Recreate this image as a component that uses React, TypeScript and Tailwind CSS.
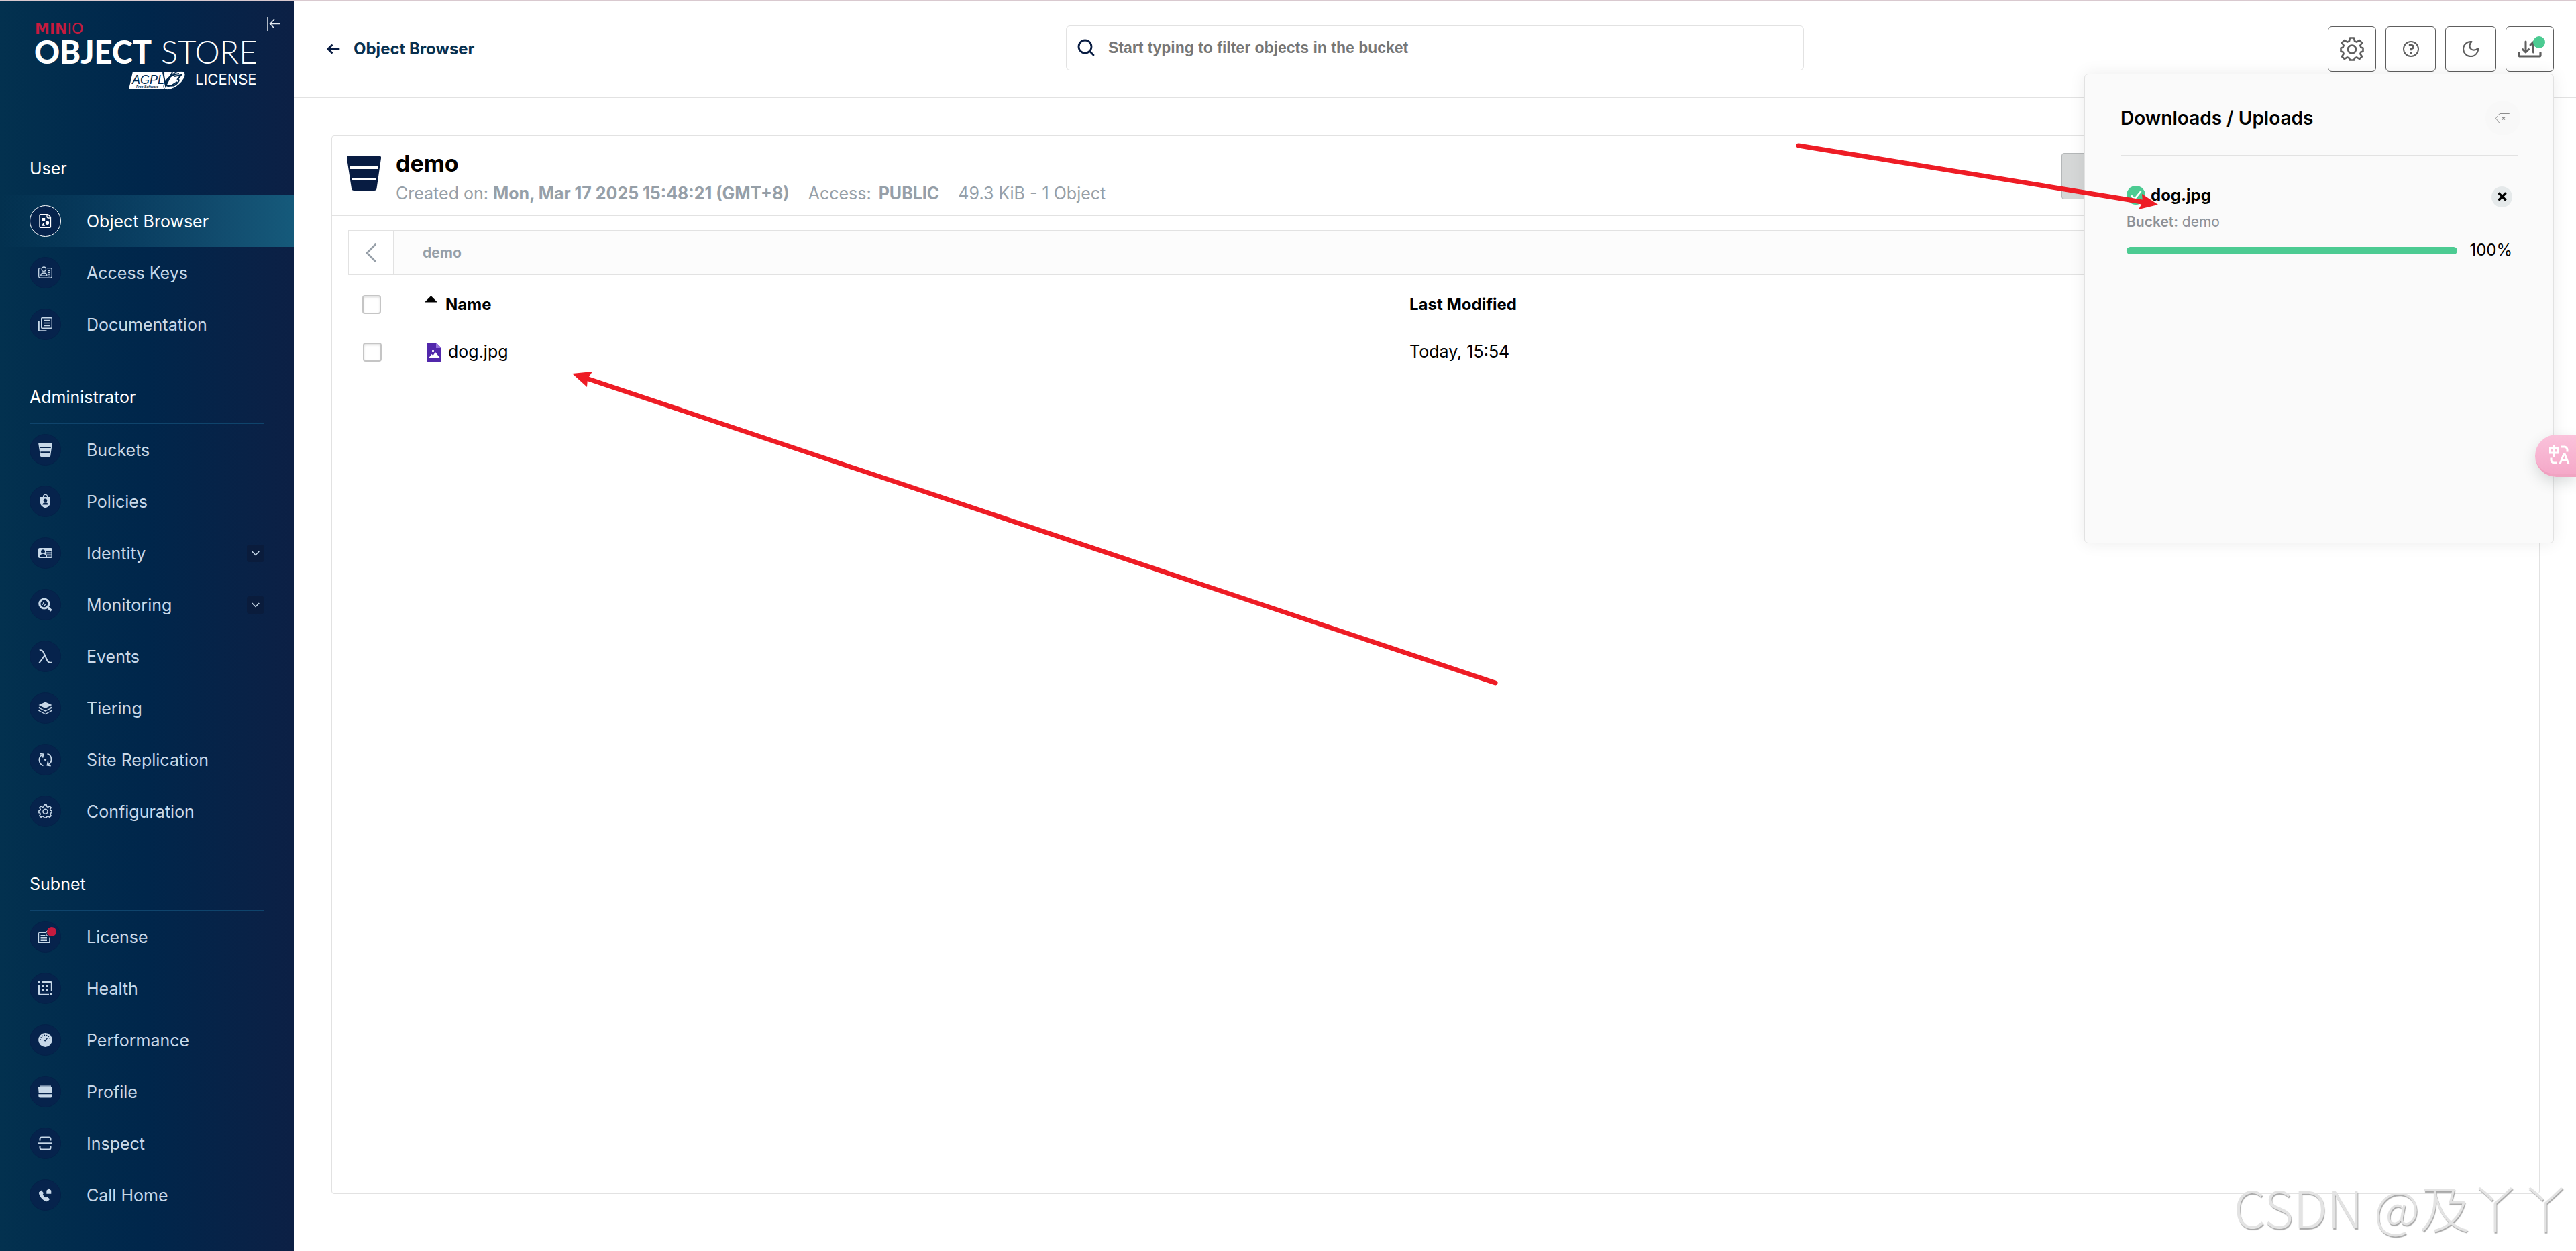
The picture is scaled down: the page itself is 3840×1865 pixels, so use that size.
import React, { useState } from "react";
import { RiTranslate } from "react-icons/ri";

type IconProps = {
  className?: string;
};

type NavItem = {
  label: string;
  icon: React.FC<IconProps>;
  active?: boolean;
  expandable?: boolean;
  badge?: boolean;
};

type NavSection = {
  title: string;
  items: NavItem[];
};

const BucketIcon: React.FC<IconProps> = ({ className }) => (
  <svg className={className} viewBox="0 0 51 52" fill="currentColor">
    <path
      fillRule="evenodd"
      d="M3 0h45q3.500 0 3 4l-6.500 45q-.5 3-3.500 3H10.500q-3 0-3.500-3L0 4Q-.5 0 3 0zM5 16v4h41v-4zM8 33v4h35v-4z"
    />
  </svg>
);

const ObjectBrowserIcon: React.FC<IconProps> = ({ className }) => (
  <svg className={className} viewBox="0 0 21 21" fill="currentColor">
    <path
      fill="none"
      stroke="currentColor"
      strokeWidth="1.300"
      d="M3 .7h11.500L18.500 4.500v14.500q0 1.300-1.300 1.300H3.300Q2 20.300 2 19V2q0-1.300 1-1.300zM13 .7v3.500q0 1.800 1.800 1.800h3.700"
    />
    <path d="M5 6h5.200v4.400H5zM7.500 13.200l2.600 4.600H4.900z" />
    <circle cx="13.500" cy="13.300" r="2.700" />
  </svg>
);

const AccessKeysIcon: React.FC<IconProps> = ({ className }) => (
  <svg
    className={className}
    viewBox="0 0 21 21"
    fill="none"
    stroke="currentColor"
    strokeWidth="1.300"
  >
    <path d="M4 3.700H2.500Q.7 3.700.7 5.500v10.800q0 1.800 1.800 1.800h16q1.800 0 1.800-1.800V5.500q0-1.800-1.800-1.800H13" />
    <circle cx="8.300" cy="5.200" r="3.200" />
    <path d="M3.700 15.200q0-4.200 4.600-4.200t4.600 4.200z" />
    <path d="M14 7.500h4M14 10.500h4M14 13h4M14 15.500h4" strokeWidth="1.500" />
  </svg>
);

const DocumentationIcon: React.FC<IconProps> = ({ className }) => (
  <svg
    className={className}
    viewBox="0 0 21 21"
    fill="none"
    stroke="currentColor"
    strokeWidth="1.400"
  >
    <rect x="4.700" y=".7" width="15.600" height="15.600" rx="1" />
    <path d="M8 4.500h9M8 8.500h9M8 12.500h9" strokeWidth="1.700" />
    <path d="M.9 5.500v14.600h11.500" strokeWidth="1.800" />
  </svg>
);

const PoliciesIcon: React.FC<IconProps> = ({ className }) => (
  <svg className={className} viewBox="0 0 21 21" fill="currentColor">
    <path
      fillRule="evenodd"
      d="M3 4h15v8.500q0 5-7.500 8Q3 17.500 3 12.500zM10.500 6.500a2.800 2.800 0 1 0 .01 0zM6.300 15.500h8.400q-.5-3.300-4.200-3.300t-4.200 3.300z"
    />
    <path
      d="M7.500 4.500V3.200a3 2.800 0 0 1 6 0v1.300"
      fill="none"
      stroke="currentColor"
      strokeWidth="1.200"
    />
  </svg>
);

const IdentityIcon: React.FC<IconProps> = ({ className }) => (
  <svg className={className} viewBox="0 0 21 21" fill="currentColor">
    <path
      fillRule="evenodd"
      d="M2 3h17q2 0 2 2v11q0 2-2 2H2q-2 0-2-2V5q0-2 2-2zM7 5.200a3 3 0 1 0 .01 0zM2.500 16h9q-.4-4-4.500-4t-4.500 4zM12 8v1.400h7.500V8zM12 11.200v1.400h7.500v-1.400zM13 14.300v1.400h6.500v-1.400z"
    />
  </svg>
);

const MonitoringIcon: React.FC<IconProps> = ({ className }) => (
  <svg
    className={className}
    viewBox="0 0 21 21"
    fill="none"
    stroke="currentColor"
  >
    <circle cx="8.800" cy="9" r="7" strokeWidth="3.200" />
    <path d="M14.500 14.500l5 5" strokeWidth="3.600" />
    <path d="M5 10.500h1.500L8 7l1.500 5L11 9.500h10" strokeWidth="1" />
  </svg>
);

const EventsIcon: React.FC<IconProps> = ({ className }) => (
  <svg
    className={className}
    viewBox="0 0 21 21"
    fill="none"
    stroke="currentColor"
    strokeWidth="2"
  >
    <path d="M1.800 1.300Q6 .5 8 5l5.500 12q2.300 4 7.200 2.400M9.500 9Q6 14.500 1.300 20.300" />
  </svg>
);

const TieringIcon: React.FC<IconProps> = ({ className }) => (
  <svg
    className={className}
    viewBox="0 0 21 21"
    fill="none"
    stroke="currentColor"
    strokeWidth="1.400"
  >
    <path d="M10.500 1.500L20.500 6l-10 5L.5 6z" fill="currentColor" stroke="none" />
    <path d="M2.500 9L1 10.300l9.500 4.700 9.500-4.700L18.500 9M2.500 13.200L1 14.500l9.500 5 9.500-5-1.500-1.300" />
  </svg>
);

const ReplicationIcon: React.FC<IconProps> = ({ className }) => (
  <svg
    className={className}
    viewBox="0 0 21 21"
    fill="none"
    stroke="currentColor"
    strokeWidth="1.800"
  >
    <path d="M7.500 19.300A8.800 8.800 0 0 1 6.500 3M2.300 1.500l5.200.7-1 5.300M13.500 1.700A8.800 8.800 0 0 1 14.500 18M18.700 19.500l-5.200-.7 1-5.300" />
    <circle cx="10.500" cy="10.500" r="1.600" fill="currentColor" stroke="none" />
  </svg>
);

const GearIcon: React.FC<IconProps> = ({ className }) => (
  <svg
    className={className}
    viewBox="0 0 36 36"
    fill="none"
    stroke="currentColor"
    strokeWidth="2.600"
    strokeLinejoin="round"
  >
    <path d="M15 1.500h6l1 4.800 3 1.300L29.200 5 33 8.800l-2.700 4 1.200 3 3 .7v5.200l-3 .6-1.200 3 2.700 4L29.200 33 25 30.400l-3 1.300-1 2.800h-6l-1-2.800-3-1.300L6.800 33 3 29.300l2.700-4-1.200-3-3-.6v-5.200l3-.7 1.200-3-2.700-4L6.800 5 11 7.600l3-1.300z" />
    <circle cx="18" cy="18.500" r="6" />
  </svg>
);

const LicenseIcon: React.FC<IconProps> = ({ className }) => (
  <svg
    className={className}
    viewBox="0 0 21 21"
    fill="none"
    stroke="currentColor"
    strokeWidth="1.200"
  >
    <path d="M11 4.500H1.200Q.6 4.500.6 5.500v14h16.200v-8" />
    <path d="M3.500 8.500h7M3.500 11.500h9.500M3.500 14h9.500M3.500 16.500h9.500" />
    <circle cx="15.500" cy="5.500" r="4" />
    <path d="M13.800 5.500l1.400 1.400 2.400-2.700" />
  </svg>
);

const HealthIcon: React.FC<IconProps> = ({ className }) => (
  <svg className={className} viewBox="0 0 21 21" fill="currentColor">
    <path d="M0 0h3v3H0zM5 0h14q2 0 2 2v13h-2.200V2.200H5zM18 18h3v3h-3zM0 5h2.200v13.800H16V21H2q-2 0-2-2z" />
    <path d="M6 6h3v3H6zM12 6h3v3h-3zM6 12h3v3H6zM12 12h3v3h-3z" />
  </svg>
);

const PerformanceIcon: React.FC<IconProps> = ({ className }) => (
  <svg className={className} viewBox="0 0 21 21" fill="currentColor">
    <circle cx="10.500" cy="10.500" r="10.400" />
    <path
      d="M3.300 10.500a7.200 7.200 0 0 1 14.400 0"
      fill="none"
      stroke="#06234c"
      strokeWidth="1.400"
      strokeDasharray="1.200 2"
    />
    <path d="M10.500 11l3-3M9 16.500h3" stroke="#06234c" strokeWidth="1.200" />
    <circle cx="10.300" cy="11.200" r="1.200" fill="#06234c" />
  </svg>
);

const ProfileIcon: React.FC<IconProps> = ({ className }) => (
  <svg className={className} viewBox="0 0 21 21" fill="currentColor">
    <path d="M2 1.500h17v1.300H2zM.5 3.700h20q.6 0 .5.800l-.7 8.600H.7L0 4.500q-.1-.8.500-.8zM.3 14.200h20.400v2q-.2 3.300-2 3.300H2.300q-1.800 0-2-3.300z" />
  </svg>
);

const InspectIcon: React.FC<IconProps> = ({ className }) => (
  <svg
    className={className}
    viewBox="0 0 21 21"
    fill="none"
    stroke="currentColor"
    strokeWidth="2"
  >
    <path d="M2.500 6.500V4q0-2.500 2.500-2.500h11q2.500 0 2.500 2.500v2.500M2.500 14.500V17q0 2.500 2.500 2.500h11q2.500 0 2.500-2.500v-2.500" />
    <path d="M0 10.500h21" strokeWidth="2.400" />
  </svg>
);

const CallHomeIcon: React.FC<IconProps> = ({ className }) => (
  <svg className={className} viewBox="0 0 21 21" fill="currentColor">
    <path d="M1 6.500L4.500 3.500 8 7.500 6.800 10q1.500 3.200 4.600 4.600l2.200-1 3.600 3.200-2.700 3Q10 21.500 4.500 15 .5 10 1 6.500z" />
    <path d="M15.800.8l4.500 3.900h-1v4h-7v-4h-1z" />
  </svg>
);

const navSections: NavSection[] = [
  {
    title: "User",
    items: [
      { label: "Object Browser", icon: ObjectBrowserIcon, active: true },
      { label: "Access Keys", icon: AccessKeysIcon },
      { label: "Documentation", icon: DocumentationIcon },
    ],
  },
  {
    title: "Administrator",
    items: [
      { label: "Buckets", icon: BucketIcon },
      { label: "Policies", icon: PoliciesIcon },
      { label: "Identity", icon: IdentityIcon, expandable: true },
      { label: "Monitoring", icon: MonitoringIcon, expandable: true },
      { label: "Events", icon: EventsIcon },
      { label: "Tiering", icon: TieringIcon },
      { label: "Site Replication", icon: ReplicationIcon },
      { label: "Configuration", icon: GearIcon },
    ],
  },
  {
    title: "Subnet",
    items: [
      { label: "License", icon: LicenseIcon, badge: true },
      { label: "Health", icon: HealthIcon },
      { label: "Performance", icon: PerformanceIcon },
      { label: "Profile", icon: ProfileIcon },
      { label: "Inspect", icon: InspectIcon },
      { label: "Call Home", icon: CallHomeIcon },
    ],
  },
];

const Logo = () => (
  <svg className="-ml-1 w-[344px] h-[118px]" viewBox="-4 -14 344 118" role="img">
    <text
      x="-1"
      y="17"
      fill="#c51b3f"
      fontFamily="DejaVu Sans"
      fontWeight="700"
      fontSize="22"
    >
      MIN
      <tspan fontWeight="400">IO</tspan>
    </text>
    <text x="-2" y="62" fill="#fff" fontFamily="Lato" fontSize="47" fontWeight="900">
      OBJECT
    </text>
    <text x="187" y="62" fill="#fff" fontFamily="Lato" fontSize="47" fontWeight="300">
      STORE
    </text>
    <path d="M145 74h47l3 26h-56z" fill="#fff" />
    <path d="M192 74h25L197 100h-4z" fill="#fff" />
    <ellipse
      cx="207"
      cy="87"
      rx="19"
      ry="9"
      transform="rotate(-38 207 87)"
      fill="#fff"
      stroke="#00284c"
      strokeWidth="1"
    />
    <path
      d="M190 75l4 20 10-20M214 77q-16 2-20 14 1 6 9 3l8-5"
      fill="none"
      stroke="#00284c"
      strokeWidth="2"
    />
    <path
      d="M207 81l10-2-5 6q4 1-1 6t-10 3"
      fill="none"
      stroke="#00284c"
      strokeWidth="2"
    />
    <text
      x="144"
      y="92"
      fill="#00284c"
      fontFamily="Liberation Sans"
      fontSize="18"
      fontStyle="italic"
    >
      AGPL
    </text>
    <text
      x="150"
      y="98"
      fill="#00284c"
      fontFamily="Liberation Sans"
      fontSize="5"
      fontWeight="700"
      fontStyle="italic"
    >
      Free Software
    </text>
    <text x="238" y="93" fill="#fff" fontFamily="Inter" fontSize="22">
      LICENSE
    </text>
  </svg>
);

const NavLink: React.FC<{ item: NavItem }> = ({ item }) => {
  const Icon = item.icon;

  return (
    <li>
      <a
        href="#"
        className={
          item.active
            ? "flex items-center h-[77px] pl-11 pr-11 text-white bg-linear-to-r from-[#155a7b]/0 to-[#155a7b]"
            : "flex items-center h-[77px] pl-11 pr-11 text-[#c8d8e8]"
        }
      >
        <span
          className={
            item.active
              ? "relative flex items-center justify-center size-[47px] rounded-full border border-white bg-[#06234c]"
              : "relative flex items-center justify-center size-[47px] rounded-full border border-[#042148] bg-[#06234c]"
          }
        >
          <Icon className="size-[21px]" />
          {item.badge && (
            <span className="absolute right-1.5 top-2 size-3.5 rounded-full bg-[#c51b3f]" />
          )}
        </span>
        <span className="ml-[38px] flex-1">{item.label}</span>
        {item.expandable && (
          <span className="flex items-center justify-center size-[26px] rounded-sm bg-[#0a1c3c]">
            <svg
              className="w-3 h-2"
              viewBox="0 0 12 8"
              fill="none"
              stroke="currentColor"
              strokeWidth="1.500"
            >
              <path d="M.7 1L6 6.500 11.300 1" />
            </svg>
          </span>
        )}
      </a>
    </li>
  );
};

const Sidebar = () => (
  <aside className="relative w-[438px] shrink-0 bg-linear-to-r from-[#03314f] via-[#00264b] to-[#0c2045] text-[25px] leading-8">
    <button className="absolute right-5 top-6" aria-label="Collapse menu">
      <svg
        className="w-5 h-[21px]"
        viewBox="0 0 20 21"
        fill="none"
        stroke="#e6ebf0"
        strokeWidth="1.500"
      >
        <path d="M1 0v21M20 10.500H5M11 4l-6.500 6.500L11 17" />
      </svg>
    </button>
    <div className="mx-[53px] h-[180px] pt-[18px] border-b border-[#0f446c]">
      <Logo />
    </div>
    <nav>
      {navSections.map((section) => (
        <section key={section.title}>
          <h2 className="ml-11 mr-11 h-[110px] pt-[54px] border-b border-[#0f446c] text-white">
            {section.title}
          </h2>
          <ul>
            {section.items.map((item) => (
              <NavLink key={item.label} item={item} />
            ))}
          </ul>
        </section>
      ))}
    </nav>
  </aside>
);

const Header = () => (
  <header className="grid grid-cols-[1fr_1100px_1fr] items-center h-[145px] px-[33px] border-b border-[#e2e2e2]">
    <a
      href="#"
      className="flex items-center gap-5 pl-4 text-2xl font-bold text-[#07304f]"
    >
      <svg
        className="w-5 h-4"
        viewBox="0 0 20 16"
        fill="none"
        stroke="#081c42"
        strokeWidth="3"
        strokeLinecap="round"
        strokeLinejoin="round"
      >
        <path d="M18 8H3M7.500 2.500L2 8l5.500 5.500" />
      </svg>
      Object Browser
    </a>
    <label className="flex items-center gap-5 h-[67px] mb-1 px-4 border border-[#e2e2e2] rounded-md">
      <svg
        className="size-[26px]"
        viewBox="0 0 26 26"
        fill="none"
        stroke="#081c42"
        strokeWidth="2.800"
        strokeLinecap="round"
      >
        <circle cx="11.500" cy="11.500" r="9.500" />
        <path d="M18.500 18.500l5.500 5.500" />
      </svg>
      <input
        type="text"
        placeholder="Start typing to filter objects in the bucket"
        aria-label="Filter objects"
        className="flex-1 font-['Liberation_Sans',sans-serif] text-[23px] font-bold outline-none placeholder:text-[#767676]"
      />
    </label>
    <div className="flex justify-end gap-3.5 text-[#5e5e5e]">
      <button
        aria-label="Settings"
        className="flex items-center justify-center w-[72px] h-[68px] border border-[#5e5e5e] rounded-md"
      >
        <GearIcon className="size-9" />
      </button>
      <button
        aria-label="Help"
        className="flex items-center justify-center w-[75px] h-[68px] border border-[#5e5e5e] rounded-md"
      >
        <svg className="size-6" viewBox="0 0 24 24" fill="none" stroke="currentColor">
          <circle cx="12" cy="12" r="11" strokeWidth="2" />
          <path d="M8.800 6.300h3.700q3 0 3 2.600t-3.500 2.800v2.500" strokeWidth="2.600" />
          <circle cx="12" cy="17.800" r="1.800" fill="currentColor" stroke="none" />
        </svg>
      </button>
      <button
        aria-label="Dark mode"
        className="flex items-center justify-center w-[76px] h-[68px] border border-[#5e5e5e] rounded-md"
      >
        <svg
          className="size-6"
          viewBox="0 0 24 24"
          fill="none"
          stroke="currentColor"
          strokeWidth="2.200"
          strokeLinejoin="round"
        >
          <path d="M13.500 1.200A11 11 0 1 0 23 11q-4 3.500-8.500 2.200Q10 11.500 10.500 6.500q.5-3.300 3-5.300z" />
        </svg>
      </button>
      <button
        aria-label="Downloads and uploads"
        className="relative flex items-center justify-center w-[72px] h-[68px] border border-[#5e5e5e] rounded-md"
      >
        <svg
          className="w-9 h-[26px]"
          viewBox="0 0 36 26"
          fill="none"
          stroke="currentColor"
          strokeLinecap="round"
          strokeLinejoin="round"
        >
          <path d="M2 18.500v4q0 1.500 1.500 1.500h29q1.500 0 1.500-1.500v-4" strokeWidth="3.200" />
          <path d="M12 2v15.500M7.500 13.500L12 18l4.500-4.500M23.500 18V2.500M19 7l4.500-4.500L28 7" strokeWidth="3" />
        </svg>
        <span className="absolute right-3 top-3.5 size-[18px] rounded-full bg-[#4ccb92]" />
      </button>
    </div>
  </header>
);

const BucketHeader = () => (
  <div className="flex items-start h-[119px] pt-[21px] pl-[22px] pr-6 border-b border-[#e2e2e2]">
    <BucketIcon className="mt-2 w-[51px] h-[52px] text-[#081c42]" />
    <div className="ml-[22px] flex-1">
      <h1 className="text-[34px] leading-10 font-bold text-black">demo</h1>
      <p className="mt-2 flex gap-7 text-[25px] leading-8 text-[#969fa8]">
        <span>
          Created on: <strong>Mon, Mar 17 2025 15:48:21 (GMT+8)</strong>
        </span>
        <span>
          Access: <strong className="ml-1">PUBLIC</strong>
        </span>
        <span>49.3 KiB - 1 Object</span>
      </p>
    </div>
    <button
      disabled
      aria-label="Rewind"
      className="w-[228px] h-[69px] mt-1 mr-[460px] rounded-sm border border-[#b4b7b8] bg-[#d5d7d7]"
    />
  </div>
);

const checkboxStyle =
  "block size-7 appearance-none rounded-sm border-2 border-[#c5c5c5] bg-white shadow-[inset_0_2px_3px_#e4e4e4]";

const ObjectTable = () => (
  <table className="ml-7 mr-6 table-fixed text-black">
    <colgroup>
      <col className="w-[110px]" />
      <col className="w-[1468px]" />
      <col />
    </colgroup>
    <thead>
      <tr className="h-20 border-b border-[#e2e2e2] text-left text-2xl">
        <th className="pt-2 pl-[17px]">
          <input type="checkbox" aria-label="Select all" className={checkboxStyle} />
        </th>
        <th className="pt-2 font-bold">
          <span className="flex items-center gap-3">
            <svg className="w-[19px] h-[25px]" viewBox="0 0 19 25">
              <path d="M9.500 0L19 9.500H0z" />
            </svg>
            Name
          </span>
        </th>
        <th className="pt-2 font-bold">Last Modified</th>
      </tr>
    </thead>
    <tbody>
      <tr className="h-[70px] border-b border-[#e2e2e2] text-[25px]">
        <td className="pl-[18px]">
          <input type="checkbox" aria-label="Select dog.jpg" className={checkboxStyle} />
        </td>
        <td>
          <span className="flex items-center gap-2.5 pl-[3px]">
            <svg className="w-[22px] h-7" viewBox="0 0 22 28">
              <path d="M1.500 0H14l8 8v18.500q0 1.500-1.500 1.500h-19Q0 28 0 26.500v-25Q0 0 1.500 0z" fill="#5127ab" />
              <path d="M14 0l8 8h-8z" fill="#9470dc" />
              <path d="M3.500 22l4-5 2 2 3.500-5 6.500 8z" fill="#fff" />
              <circle cx="9.500" cy="12.500" r="1.800" fill="#fff" />
            </svg>
            dog.jpg
          </span>
        </td>
        <td>Today, 15:54</td>
      </tr>
    </tbody>
  </table>
);

const TransfersPanel = () => {
  const [progress] = useState(100);

  return (
    <section className="absolute right-[33px] top-[109px] w-[700px] h-[700px] px-[53px] rounded-md border border-[#e2e2e2] bg-[#fafafa] text-black shadow-[0_0_24px_rgba(0,0,0,0.08)]">
      <div className="flex items-center justify-between h-[121px] pt-2.5 border-b border-[#e2e2e2]">
        <h2 className="text-[28px] font-semibold">Downloads / Uploads</h2>
        <button
          aria-label="Clear completed list"
          className="flex items-center justify-center -mr-1 size-[52px] rounded-full bg-[#f8f8f8]"
        >
          <svg
            className="w-[22px] h-[15px]"
            viewBox="0 0 22 15"
            fill="none"
            stroke="#8d8d8d"
          >
            <path d="M6.500.5h14q1 0 1 1v12q0 1-1 1h-14q-1 0-6-7 5-7 6-7z" />
            <path d="M10 5.500l4 4M14 5.500l-4 4" strokeWidth="1.600" />
          </svg>
        </button>
      </div>
      <div className="h-[186px] pt-[43px] pl-[9px] pr-2 border-b border-[#e2e2e2]">
        <div className="flex items-center h-8">
          <svg className="size-7" viewBox="0 0 28 28">
            <circle cx="14" cy="14" r="14" fill="#4ccb92" />
            <path d="M7 14.500l5 5L21.500 8" fill="none" stroke="#fff" strokeWidth="2.600" />
          </svg>
          <span className="ml-2 flex-1 text-2xl font-bold">dog.jpg</span>
          <button
            aria-label="Remove from list"
            className="flex items-center justify-center mt-1 size-[31px] rounded-full bg-[#e5e9ea]"
          >
            <svg
              className="size-3.5"
              viewBox="0 0 14 14"
              stroke="#000"
              strokeWidth="3.600"
            >
              <path d="M1.500 1.500l11 11M12.500 1.500l-11 11" />
            </svg>
          </button>
        </div>
        <p className="mt-2.5 text-[21px] leading-7 text-[#8e9197]">
          <strong className="font-semibold">Bucket:</strong> demo
        </p>
        <div className="mt-3 flex items-center gap-[18px]">
          <div className="flex-1 h-[11px] rounded-full bg-[#e5e5e5]">
            <div
              className="h-full rounded-full bg-[#4ccb92]"
              style={{ width: `${progress}%` }}
            />
          </div>
          <span className="text-2xl">{progress}%</span>
        </div>
      </div>
    </section>
  );
};

// Flechas rojas dibujadas sobre la página
const Arrows = () => (
  <svg
    className="absolute left-0 top-0 w-[3840px] h-[1100px] pointer-events-none"
    viewBox="0 0 3840 1100"
    fill="#ee1c25"
    stroke="#ee1c25"
    strokeLinecap="round"
  >
    <path d="M2229 1017L874 563" strokeWidth="7" />
    <path d="M853 556l30-3-7 11-1 12z" stroke="none" />
    <path d="M2681 216l512 84" strokeWidth="7" />
    <path d="M3217 304l-24-16 1 12-6 11z" stroke="none" />
  </svg>
);

const App = () => {
  return (
    <div className="relative flex min-h-screen overflow-hidden border-t border-[#d9c9cf] bg-white font-['Inter',sans-serif]">
      <Sidebar />
      <main className="relative flex-1 flex flex-col">
        <Header />
        <div className="flex-1 flex flex-col pt-14 pb-[85px] pl-14 pr-[54px]">
          <div className="flex-1 flex flex-col rounded-sm border border-[#e2e2e2]">
            <BucketHeader />
            <div className="mt-[21px] ml-6 mr-6 flex h-[67px] border border-[#e2e2e2] bg-[#fcfcfc]">
              <button
                aria-label="Back"
                className="flex items-center justify-center w-[67px] border-r border-[#e2e2e2] bg-white"
              >
                <svg
                  className="w-4 h-7"
                  viewBox="0 0 16 28"
                  fill="none"
                  stroke="#969fa8"
                  strokeWidth="2.600"
                  strokeLinecap="round"
                >
                  <path d="M14.500 1.500L2 14l12.500 12.500" />
                </svg>
              </button>
              <span className="self-center ml-[43px] text-[21px] font-bold text-[#969fa8]">
                demo
              </span>
            </div>
            <ObjectTable />
          </div>
        </div>
        <TransfersPanel />
        <button
          aria-label="Translate"
          className="absolute right-0 top-[647px] flex items-center w-[61px] h-[63px] pl-[18px] rounded-l-full border-b-4 border-[#ee9dbd]/80 bg-linear-to-b from-[#fabfd9]/95 to-[#f4a3c5]/95 text-white shadow-[0_8px_20px_rgba(60,80,80,0.18)]"
        >
          <RiTranslate className="size-9" />
        </button>
        <p className="absolute right-2 bottom-4 text-[75px] leading-[100px] font-light text-[#e3e3e3] font-['Noto_Sans_CJK_SC',sans-serif] [text-shadow:1px_2px_1px_#a8a8a8]">
          CSDN @及丫丫
        </p>
      </main>
      <Arrows />
    </div>
  );
};

export default App;
